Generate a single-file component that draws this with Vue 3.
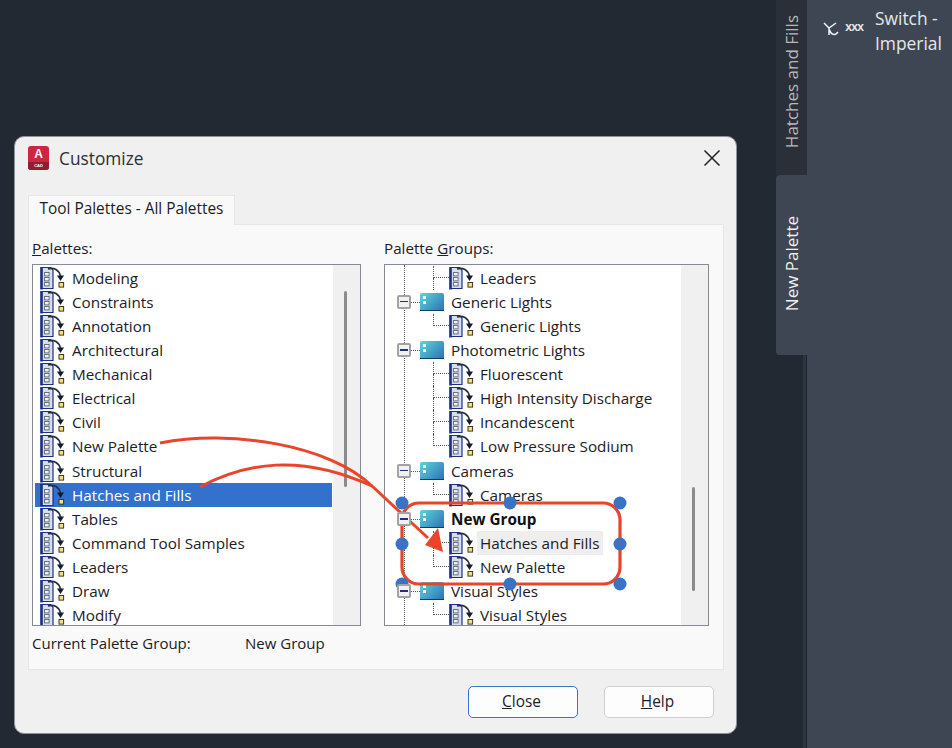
<script setup>
const palettes = ['Modeling','Constraints','Annotation','Architectural','Mechanical','Electrical','Civil','New Palette','Structural','Hatches and Fills','Tables','Command Tool Samples','Leaders','Draw','Modify']
const groups = [
  { t:'Leaders', lvl:1 },
  { t:'Generic Lights', lvl:0 },
  { t:'Generic Lights', lvl:1, last:true },
  { t:'Photometric Lights', lvl:0 },
  { t:'Fluorescent', lvl:1 },
  { t:'High Intensity Discharge', lvl:1 },
  { t:'Incandescent', lvl:1 },
  { t:'Low Pressure Sodium', lvl:1, last:true },
  { t:'Cameras', lvl:0 },
  { t:'Cameras', lvl:1, last:true },
  { t:'New Group', lvl:0, bold:true },
  { t:'Hatches and Fills', lvl:1, hl:true },
  { t:'New Palette', lvl:1, last:true },
  { t:'Visual Styles', lvl:0 },
  { t:'Visual Styles', lvl:1, last:true },
]
const handles = [[402,503],[510,503],[620,503],[402,544],[620,544],[402,584],[510,584],[620,584]]
</script>

<template>
  <div class="screen">
    <svg width="0" height="0" class="defs">
      <defs>
        <symbol id="pal" viewBox="0 0 25 24">
          <path d="M1.5 1.5 H10.5 L13 4 V22.5 H1.5 Z" fill="#d5deee" stroke="#1d2f86" stroke-width="1.2"/>
          <path d="M1.5 1 V23.5" stroke="#1d2f86" stroke-width="2.6"/>
          <rect x="4.5" y="6.5" width="4.6" height="3.4" fill="#eef1f6" stroke="#6a7280"/>
          <rect x="4.5" y="11.5" width="4.6" height="3.4" fill="#eef1f6" stroke="#6a7280"/>
          <rect x="4.5" y="16.5" width="4.6" height="3.4" fill="#eef1f6" stroke="#6a7280"/>
          <path d="M8 3 C14 1 19 4 20.5 10" fill="none" stroke="#28303f" stroke-width="1.6"/>
          <path d="M17 9.5 H24 L20.5 15 Z" fill="#141c2a"/>
          <rect x="19" y="16.5" width="4.6" height="4.6" fill="#f6e27a" stroke="#3c3a20"/>
        </symbol>
      </defs>
    </svg>

    <div class="desk">
      <div class="dialog">
        <header class="title">
          <div class="logo"><span class="logo-a">A</span><span class="logo-cad">CAD</span></div>
          <span class="title-text">Customize</span>
          <svg class="x" width="18" height="18" viewBox="0 0 18 18"><path d="M1.5 1.5 L16.5 16.5 M16.5 1.5 L1.5 16.5" stroke="#222" stroke-width="1.5"/></svg>
        </header>

        <div class="tab">Tool Palettes - All Palettes</div>
        <section class="pane">
          <div class="cols">
            <div class="col left">
              <label class="lbl"><u>P</u>alettes:</label>
              <div class="list">
                <div class="rows">
                  <div v-for="p in palettes" :key="p" class="row" :class="{ sel: p === 'Hatches and Fills' }">
                    <svg class="pal"><use href="#pal"/></svg>
                    <span class="rt">{{ p }}</span>
                  </div>
                </div>
                <div class="track"><i class="thumb t1"></i></div>
              </div>
            </div>
            <div class="col right">
              <label class="lbl">Palette <u>G</u>roups:</label>
              <div class="list">
                <div class="rows tree">
                  <div v-for="(g,i) in groups" :key="i" class="row node" :class="g.lvl ? 'child' : 'parent'">
                    <template v-if="g.lvl === 0">
                      <span class="exp"><i></i></span>
                      <span class="folder"><b></b><b></b></span>
                      <span class="rt" :class="{ bold: g.bold }">{{ g.t }}</span>
                    </template>
                    <template v-else>
                      <span class="elbow" :class="{ end: g.last }"></span>
                      <svg class="pal"><use href="#pal"/></svg>
                      <span class="rt" :class="{ hl: g.hl }">{{ g.t }}</span>
                    </template>
                  </div>
                </div>
                <div class="track"><i class="thumb t2"></i></div>
              </div>
            </div>
          </div>
          <div class="current"><span class="cur-l">Current Palette Group:</span><span>New Group</span></div>
        </section>

        <footer class="foot">
          <button class="btn def"><u>C</u>lose</button>
          <button class="btn"><u>H</u>elp</button>
        </footer>
      </div>

      <svg class="annot" width="776" height="748" viewBox="0 0 776 748">
        <rect x="402" y="503" width="218" height="81" rx="17" fill="none" stroke="#e8452b" stroke-width="3.2"/>
        <path d="M160 443 C 230 429 330 445 372 486 L 428 538" fill="none" stroke="#e8452b" stroke-width="3"/>
        <path d="M200 487 C 245 463 300 453 372 486" fill="none" stroke="#e8452b" stroke-width="3"/>
        <path d="M443 552 L425 545 L438 528 Z" fill="#e8452b"/>
        <circle v-for="(h,i) in handles" :key="i" :cx="h[0]" :cy="h[1]" r="6.5" fill="#3a73c6"/>
      </svg>
    </div>

    <aside class="strip">
      <div class="vtab back"><span>Hatches and Fills</span></div>
      <div class="vtab active"><span>New Palette</span></div>
      <div class="strip-rest"></div>
    </aside>

    <aside class="panel">
      <svg class="sw" width="18" height="18" viewBox="0 0 18 18"><path d="M2 3 L7 8 L14 3 M7 8 V15 M7.5 10 C9 15 13 16 16 12" fill="none" stroke="#f0f3f6" stroke-width="1.5"/></svg>
      <span class="xxx">xxx</span>
      <span class="sw-text">Switch - Imperial</span>
    </aside>
  </div>
</template>

<style>
html, body { margin: 0; background: #222932; }
</style>

<style scoped>
.screen { width: 952px; height: 748px; display: flex; background: #222932; overflow: hidden; font-family: "Open Sans", "Noto Sans", sans-serif; color: #1c2026; }
.defs { position: absolute; }
.desk { position: relative; width: 776px; height: 748px; flex: none; }
.dialog { position: absolute; left: 14px; top: 136px; width: 723px; height: 598px; box-sizing: border-box; background: #f0f0f0; border-radius: 10px; border: 1px solid #8f9399; padding: 0 12px 0 13px; display: flex; flex-direction: column; }
.title { height: 58px; flex: none; display: flex; align-items: flex-start; padding-top: 9px; box-sizing: border-box; gap: 10px; }
.logo { width: 21px; height: 24px; background: #d02440; border-radius: 3px; display: flex; flex-direction: column; align-items: center; overflow: hidden; color: #fff; }
.logo-a { font: 700 12px/16px "Liberation Sans", sans-serif; }
.logo-cad { flex: 1; width: 100%; text-align: center; background: #8e1f33; font: 700 4px/8px "Liberation Sans", sans-serif; }
.title-text { font-size: 17.3px; line-height: 26px; color: #2b2f36; }
.x { margin-left: auto; margin-top: 3px; margin-right: 3px; }
.tab { width: 207px; height: 30px; flex: none; box-sizing: border-box; background: #f9f9f9; border: 1px solid #e6e6e6; border-bottom: 0; text-align: center; font-size: 15.4px; line-height: 25px; position: relative; z-index: 1; white-space: nowrap; }
.pane { flex: none; height: 446px; margin-top: -1px; background: #f9f9f9; border: 1px solid #e6e6e6; box-sizing: border-box; padding: 0 14px 0 3px; display: flex; flex-direction: column; }
.cols { display: flex; gap: 23px; }
.col.left { width: 329px; }
.col.right { width: 325px; }
.lbl { display: block; height: 39px; line-height: 47px; font-size: 15.2px; white-space: nowrap; }
.list { height: 362px; box-sizing: border-box; background: #fff; border: 1.5px solid #858b96; display: flex; overflow: hidden; }
.rows { flex: 1; padding-top: 0.5px; min-width: 0; }
.row { height: 24.13px; display: flex; align-items: center; position: relative; white-space: nowrap; font-size: 15.25px; }
.left .row { padding-left: 7px; }
.pal { width: 25px; height: 24px; flex: none; }
.rt { margin-left: 7px; line-height: 24px; }
.sel { background: #3272cc; color: #fff; margin-left: 1.5px; padding-left: 5.5px !important; margin-right: 1px; }
.track { width: 27px; flex: none; background: #f0f0f0; position: relative; }
.thumb { position: absolute; left: 11px; width: 3px; background: #8b8b8b; border-radius: 2px; }
.t1 { top: 26px; height: 196px; }
.t2 { top: 222px; height: 104px; }
.tree { position: relative; }
.tree::before { content: ""; position: absolute; left: 18.5px; top: 0; bottom: 0; border-left: 1px dotted #555; }
.parent .exp { position: absolute; left: 11.5px; top: 5px; width: 14px; height: 14px; box-sizing: border-box; background: #f1f1f1; border: 2px solid #a2a2a2; border-radius: 2px; display: flex; align-items: center; justify-content: center; z-index: 1; }
.exp i { width: 8px; height: 1.5px; background: #24307c; }
.parent::after { content: ""; position: absolute; left: 25px; width: 10px; top: 12px; border-top: 1px dotted #555; }
.folder { margin-left: 35px; width: 24px; height: 18px; flex: none; box-sizing: border-box; background: linear-gradient(135deg, #62d3dc, #2b74b8); border-bottom: 1.5px solid #123a6a; border-radius: 2px 2px 0 0; position: relative; display: flex; flex-direction: column; gap: 2px; padding: 3px 0 0 3px; }
.folder b { width: 3px; height: 3px; background: #fff; }
.parent .rt { margin-left: 7px; }
.child { padding-left: 47px; }
.child .pal { margin-left: 17px; margin-right: 0; }
.elbow { position: absolute; left: 47.5px; top: 0; width: 16px; height: 12px; box-sizing: border-box; border-left: 1px dotted #555; border-bottom: 1px dotted #555; }
.child .elbow:not(.end)::after { content: ""; position: absolute; left: -1px; top: 12px; height: 12px; border-left: 1px dotted #555; }
.child .rt { padding: 0 4px 0 3px; margin-left: 3px; }
.bold { font-weight: 700; color: #111; }
.hl { background: #eeeeee; }
.current { height: 36px; line-height: 35px; font-size: 15px; display: flex; white-space: nowrap; }
.cur-l { width: 213px; }
.foot { flex: 1; display: flex; justify-content: flex-end; gap: 26px; padding: 16px 10px 0 0; box-sizing: border-box; }
.btn { width: 110px; height: 32px; box-sizing: border-box; background: #fdfdfd; border: 1px solid #d0d0d0; border-radius: 5px; font: inherit; font-size: 15.4px; line-height: 28px; color: #1c2026; padding: 0 3px 0 0; }
.btn.def { border: 1.5px solid #3a73d0; }
.annot { position: absolute; left: 0; top: 0; pointer-events: none; }
.strip { width: 31px; flex: none; display: flex; flex-direction: column; }
.vtab { display: flex; justify-content: center; box-sizing: border-box; font-size: 17px; flex: none; }
.vtab span { writing-mode: vertical-rl; transform: rotate(180deg); white-space: nowrap; }
.back { height: 175px; background: #2b3038; color: #b4b9c0; padding-top: 15px; align-items: flex-start; }
.active { height: 180px; background: #3f4653; border-radius: 4px 0 0 4px; align-items: center; color: #eef0f3; padding-bottom: 3px; }
.strip-rest { flex: 1; margin-left: 27px; background: #2f3540; border-right: 1px solid #1f2530; }
.panel { flex: 1; background: #3f4653; position: relative; display: flex; align-items: flex-start; padding: 6px 0 0 15px; color: #e4e8ec; }
.sw { margin-top: 14px; flex: none; }
.xxx { width: 30px; margin-left: 5px; margin-top: 12px; font: 700 12px/20px "Liberation Mono", monospace; letter-spacing: -1.2px; flex: none; color: #e4e8ec; }
.sw-text { font-size: 17.4px; line-height: 25px; width: 72px; }
</style>
